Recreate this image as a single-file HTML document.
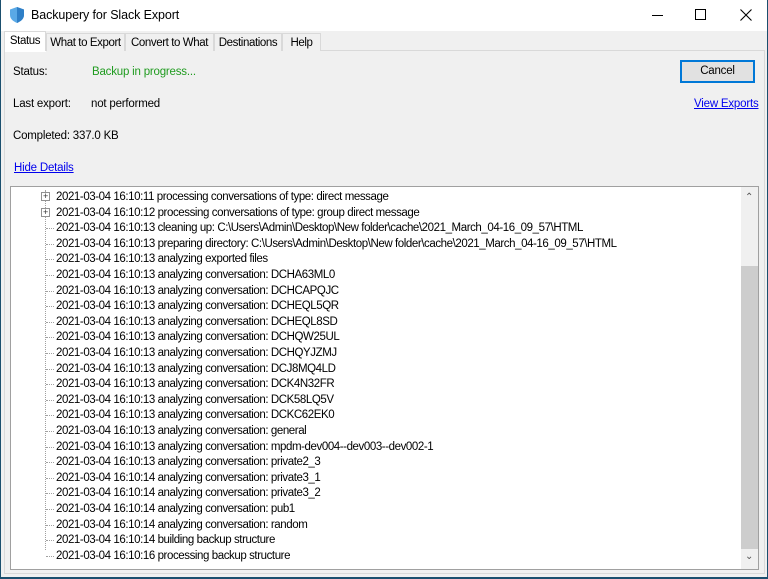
<!DOCTYPE html>
<html><head><style>
*{margin:0;padding:0;box-sizing:border-box}
body{width:768px;height:579px;overflow:hidden;background:#1b4f6e;font-family:"Liberation Sans",Tahoma,sans-serif;font-size:11.5px;letter-spacing:-0.2px;color:#000;position:relative}
.win{position:absolute;left:1px;top:0;width:766px;height:577px;background:#f0f0f0}
.title{position:absolute;left:0;top:0;width:766px;height:31px;background:#fff}
.t{position:absolute;white-space:nowrap}
.tab{position:absolute;top:33px;height:18px;border:1px solid #d9d9d9;border-bottom:none;background:#f0f0f0;padding-top:3px;text-align:center;font-size:11.5px;letter-spacing:-0.4px;white-space:nowrap;overflow:hidden}
.panel{position:absolute;left:3px;top:50px;width:761px;height:524px;border:1px solid #d9d9d9;background:#f0f0f0}
a{color:#0000ee;text-decoration:underline}
.list{position:absolute;left:9px;top:186px;width:749px;height:384px;border:1px solid #a0a0a0;background:#fff;overflow:hidden}
.row{position:absolute;left:45px;font-size:11.5px;letter-spacing:-0.42px;white-space:nowrap;line-height:14px}
.vl{position:absolute;left:34px;top:3px;height:360px;border-left:1px dotted #a0a0a0}
.hl{position:absolute;left:35px;width:8px;border-top:1px dotted #a0a0a0}
.box{position:absolute;left:30px;width:9px;height:9px;border:1px solid #919191;background:#fff;font-size:9px;line-height:7px;text-align:center;color:#333}
.sb{position:absolute;right:0;top:0;width:17px;height:382px;background:#f0f0f0}
</style></head><body>
<div class="win">
<div class="title">
<svg style="position:absolute;left:9px;top:7px" width="14" height="16" viewBox="0 0 14 16"><path d="M7 0 L14 2.5 V8 C14 12 10.5 14.5 7 16 C3.5 14.5 0 12 0 8 V2.5 Z" fill="#5aa9e6"/><path d="M7 0 L14 2.5 V8 C14 12 10.5 14.5 7 16 Z" fill="#2f7fc7"/></svg>
<div class="t" style="left:30px;top:8px;font-size:12.5px;letter-spacing:-0.1px">Backupery for Slack Export</div>
<div style="position:absolute;left:651px;top:15px;width:11px;border-top:1px solid #000"></div>
<div style="position:absolute;left:694px;top:9px;width:11px;height:11px;border:1px solid #000"></div>
<svg style="position:absolute;left:739px;top:9px" width="12" height="12" viewBox="0 0 12 12"><path d="M0.5 0.5 L11.5 11.5 M11.5 0.5 L0.5 11.5" stroke="#000" stroke-width="1.1"/></svg>
</div>
<div class="panel"></div>
<div class="tab" style="left:3px;width:42px;top:31px;height:20px;background:#fff;z-index:2">Status</div>
<div class="tab" style="left:45px;width:79px">What to Export</div>
<div class="tab" style="left:124px;width:89px">Convert to What</div>
<div class="tab" style="left:213px;width:68px">Destinations</div>
<div class="tab" style="left:281px;width:39px">Help</div>
<div style="position:absolute;left:4px;top:51px;width:41px;height:1px;background:#fff;z-index:3"></div>
<div class="t" style="left:12px;top:66px">Status:</div>
<div class="t" style="left:91px;top:66px;color:#1f9b1f">Backup in progress...</div>
<div class="t" style="left:12px;top:98px">Last export:</div>
<div class="t" style="left:90px;top:98px">not performed</div>
<div class="t" style="left:12px;top:130px">Completed: 337.0 KB</div>
<a class="t" style="left:13px;top:162px">Hide Details</a>
<a class="t" style="left:693px;top:98px">View Exports</a>
<div style="position:absolute;left:679px;top:60px;width:75px;height:23px;border:2px solid #0078d7;background:#e1e1e1;text-align:center;line-height:19px">Cancel</div>
<div class="list">
<div class="vl"></div>
<div class="box" style="top:5px">+</div>
<div class="box" style="top:21px">+</div>
<div class="sb">
<div style="position:absolute;left:4px;top:5px;font-size:10px;color:#555">&#8963;</div>
<div style="position:absolute;left:0;top:79px;width:17px;height:283px;background:#cdcdcd"></div>
<div style="position:absolute;left:4px;top:364px;font-size:10px;color:#555">&#8964;</div>
</div>
<div id="rows"></div>
</div>
</div>
<script>
var r=["2021-03-04 16:10:11 processing conversations of type: direct message","2021-03-04 16:10:12 processing conversations of type: group direct message","2021-03-04 16:10:13 cleaning up: C:\\Users\\Admin\\Desktop\\New folder\\cache\\2021_March_04-16_09_57\\HTML","2021-03-04 16:10:13 preparing directory: C:\\Users\\Admin\\Desktop\\New folder\\cache\\2021_March_04-16_09_57\\HTML","2021-03-04 16:10:13 analyzing exported files","2021-03-04 16:10:13 analyzing conversation: DCHA63ML0","2021-03-04 16:10:13 analyzing conversation: DCHCAPQJC","2021-03-04 16:10:13 analyzing conversation: DCHEQL5QR","2021-03-04 16:10:13 analyzing conversation: DCHEQL8SD","2021-03-04 16:10:13 analyzing conversation: DCHQW25UL","2021-03-04 16:10:13 analyzing conversation: DCHQYJZMJ","2021-03-04 16:10:13 analyzing conversation: DCJ8MQ4LD","2021-03-04 16:10:13 analyzing conversation: DCK4N32FR","2021-03-04 16:10:13 analyzing conversation: DCK58LQ5V","2021-03-04 16:10:13 analyzing conversation: DCKC62EK0","2021-03-04 16:10:13 analyzing conversation: general","2021-03-04 16:10:13 analyzing conversation: mpdm-dev004--dev003--dev002-1","2021-03-04 16:10:13 analyzing conversation: private2_3","2021-03-04 16:10:14 analyzing conversation: private3_1","2021-03-04 16:10:14 analyzing conversation: private3_2","2021-03-04 16:10:14 analyzing conversation: pub1","2021-03-04 16:10:14 analyzing conversation: random","2021-03-04 16:10:14 building backup structure","2021-03-04 16:10:16 processing backup structure"];
var h="";r.forEach(function(s,i){var y=3+i*15.6;h+='<div class="row" style="top:'+y+'px">'+s.replace(/</g,"&lt;")+'</div>';if(i>1)h+='<div class="hl" style="top:'+(y+7)+'px"></div>';});
document.getElementById("rows").innerHTML=h;
</script>
</body></html>
